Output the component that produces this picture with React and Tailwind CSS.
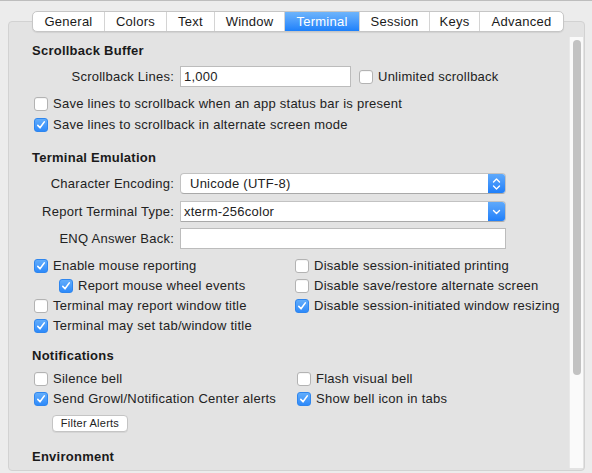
import React from "react";

const FONT = { fontFamily: '"Liberation Sans", Arial, sans-serif' };

const TABS = [
  { label: "General", w: "w-[71px]" },
  { label: "Colors", w: "w-[62px]" },
  { label: "Text", w: "w-[48px]" },
  { label: "Window", w: "w-[70px]" },
  { label: "Terminal", w: "w-[75px]", active: true },
  { label: "Session", w: "w-[70px]" },
  { label: "Keys", w: "w-[50px]" },
  { label: "Advanced", w: "w-[84px]" },
];

function Check({ checked }) {
  if (checked) {
    return (
      <span className="flex h-[14px] w-[14px] shrink-0 items-center justify-center rounded-[3px] bg-gradient-to-b from-[#62adfb] to-[#2d8afa] border border-[#2f86ee]">
        <svg width="10" height="10" viewBox="0 0 10 10">
          <path
            d="M1.8 5.4 L4 7.8 L8.3 1.9"
            fill="none"
            stroke="white"
            strokeWidth="1.6"
            strokeLinecap="round"
            strokeLinejoin="round"
          />
        </svg>
      </span>
    );
  }
  return (
    <span className="h-[14px] w-[14px] shrink-0 rounded-[3px] border border-[#b3b3b3] bg-white shadow-[inset_0_1px_0_rgba(0,0,0,0.04)]" />
  );
}

function CheckRow({ label, checked, className = "" }) {
  return (
    <div className={`flex h-[20px] items-center ${className}`}>
      <Check checked={checked} />
      <span className="ml-[5px] text-[13px] text-[#222] whitespace-nowrap">{label}</span>
    </div>
  );
}

function SectionTitle({ children, className = "" }) {
  return (
    <div className={`-ml-[2px] flex h-[20px] items-center text-[13px] font-bold text-[#1a1a1a] ${className}`}>
      {children}
    </div>
  );
}

function FieldLabel({ children }) {
  return (
    <span className="w-[140px] shrink-0 text-right text-[13px] text-[#222] whitespace-nowrap">
      {children}
    </span>
  );
}

function Popup({ value, stepper }) {
  return (
    <div
      className={`ml-[6px] flex h-[21px] w-[326px] overflow-hidden border border-[#c2c2c2] border-b-[#a9a9a9] bg-white ${
        stepper ? "rounded-[4px]" : "rounded-r-[4px]"
      }`}
    >
      <span
        className={`flex-1 self-center text-[13px] text-[#222] ${stepper ? "pl-[9px]" : "pl-[3px]"}`}
      >
        {value}
      </span>
      <span className="flex w-[17px] items-center justify-center bg-gradient-to-b from-[#5ea9fb] to-[#1e7ffa]">
        {stepper ? (
          <svg width="9" height="14" viewBox="0 0 9 14">
            <path
              d="M1.5 5 L4.5 2 L7.5 5 M1.5 9 L4.5 12 L7.5 9"
              fill="none"
              stroke="white"
              strokeWidth="1.4"
              strokeLinecap="round"
              strokeLinejoin="round"
            />
          </svg>
        ) : (
          <svg width="9" height="8" viewBox="0 0 9 8">
            <path
              d="M1.5 2.5 L4.5 5.5 L7.5 2.5"
              fill="none"
              stroke="white"
              strokeWidth="1.4"
              strokeLinecap="round"
              strokeLinejoin="round"
            />
          </svg>
        )}
      </span>
    </div>
  );
}

export default function App() {
  return (
    <div
      className="h-[473px] w-[592px] overflow-hidden border-t border-[#bdbdbd] bg-[#ececec] tracking-[0.25px]"
      style={FONT}
    >
      {/* tab bar */}
      <div className="relative z-10 mt-[10px] ml-[32px] flex h-[21px] w-max overflow-hidden rounded-[5px] border border-[#c6c6c6] bg-white shadow-[0_1px_1px_rgba(0,0,0,0.08)]">
        {TABS.map((t, i) => (
          <div
            key={t.label}
            className={`flex ${t.w} items-center justify-center text-[13px] ${
              i > 0 ? "border-l border-[#d4d4d4]" : ""
            } ${
              t.active
                ? "bg-gradient-to-b from-[#6db4fb] to-[#1b80fb] text-white"
                : "text-[#1a1a1a]"
            }`}
          >
            {t.label}
          </div>
        ))}
      </div>

      {/* panel */}
      <div className="-mt-[11px] ml-[8px] flex h-[450px] w-[577px] rounded-[4px] border border-[#d2d2d2] bg-[#e3e3e3]">
        <div className="flex-1 pl-[25px] pt-[19px]">
          <SectionTitle>Scrollback Buffer</SectionTitle>

          <div className="mt-[5px] flex h-[21px] items-center">
            <FieldLabel>Scrollback Lines:</FieldLabel>
            <div className="ml-[6px] flex h-[21px] w-[171px] items-center border border-[#bcbcbc] bg-white pl-[3px] text-[13px] text-[#222]">
              1,000
            </div>
            <CheckRow className="ml-[8px]" label="Unlimited scrollback" />
          </div>

          <div className="mt-[7px]">
            <CheckRow label="Save lines to scrollback when an app status bar is present" />
            <CheckRow checked className="mt-[1px]" label="Save lines to scrollback in alternate screen mode" />
          </div>

          <SectionTitle className="mt-[13px]">Terminal Emulation</SectionTitle>

          <div className="mt-[5px] flex items-center">
            <FieldLabel>Character Encoding:</FieldLabel>
            <Popup value="Unicode (UTF-8)" stepper />
          </div>
          <div className="mt-[7px] flex items-center">
            <FieldLabel>Report Terminal Type:</FieldLabel>
            <Popup value="xterm-256color" />
          </div>
          <div className="mt-[6px] flex items-center">
            <FieldLabel>ENQ Answer Back:</FieldLabel>
            <div className="ml-[6px] h-[21px] w-[326px] border border-[#bcbcbc] bg-white" />
          </div>

          <div className="mt-[7px] grid grid-cols-[261px_1fr]">
            <CheckRow checked label="Enable mouse reporting" />
            <CheckRow label="Disable session-initiated printing" />
            <CheckRow checked className="ml-[25px]" label="Report mouse wheel events" />
            <CheckRow label="Disable save/restore alternate screen" />
            <CheckRow label="Terminal may report window title" />
            <CheckRow checked label="Disable session-initiated window resizing" />
            <CheckRow checked label="Terminal may set tab/window title" />
          </div>

          <SectionTitle className="mt-[10px]">Notifications</SectionTitle>

          <div className="mt-[3px] grid grid-cols-[263px_1fr]">
            <CheckRow label="Silence bell" />
            <CheckRow label="Flash visual bell" />
            <CheckRow checked label="Send Growl/Notification Center alerts" />
            <CheckRow checked label="Show bell icon in tabs" />
          </div>

          <button
            type="button"
            className="ml-[18px] mt-[6px] flex h-[17px] w-[76px] items-center justify-center rounded-[4px] border border-[#c4c4c4] bg-white text-[11px] text-[#222] shadow-[0_1px_0_rgba(0,0,0,0.06)]"
          >
            Filter Alerts
          </button>

          <SectionTitle className="mt-[15px]">Environment</SectionTitle>
        </div>

        {/* scrollbar */}
        <div className="mb-[2px] mr-[1px] mt-[15px] flex w-[14px] justify-center border-l border-[#e9e9e9] bg-[#fafafa] pt-[3px]">
          <div className="h-[335px] w-[8px] rounded-full bg-[#c2c2c2]" />
        </div>
      </div>
    </div>
  );
}
